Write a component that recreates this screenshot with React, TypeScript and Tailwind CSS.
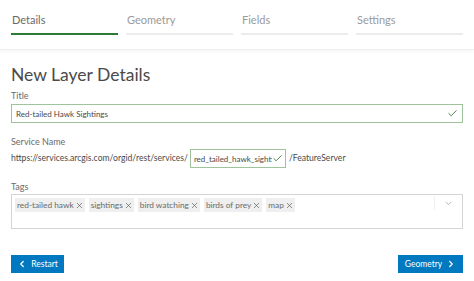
import { ChevronDown, ChevronLeft, ChevronRight, Check, X } from 'lucide-react';

const tabs = ['Details', 'Geometry', 'Fields', 'Settings'];
const tags = ['red-tailed hawk', 'sightings', 'bird watching', 'birds of prey', 'map'];

export default function App() {
  return (
    <div className="h-[281px] w-[474px] overflow-hidden bg-white font-['Lato',sans-serif] text-[#4a4a4a]">
      <div className="flex gap-2 border-b border-[#f0f0f0] px-[11px] pt-[12px] pb-[14px] shadow-[0_2px_3px_rgba(0,0,0,0.04)]">
        {tabs.map((tab, i) => (
          <div key={tab} className="flex-1">
            <div className={`h-[20px] px-[1px] text-[11px] leading-[16px] ${i === 0 ? 'text-[#6a6a6a]' : 'text-[#9a9a9a]'}`}>
              {tab}
            </div>
            <div className={`mt-[1px] h-[2px] ${i === 0 ? 'bg-[#2d7a34]' : 'bg-[#ececec]'}`} />
          </div>
        ))}
      </div>

      <div className="px-[11px] pt-[14px]">
        <h1 className="text-[17.5px] leading-[22px] text-[#4a4a4a]">New Layer Details</h1>

        <label className="mt-[4px] block text-[9px] leading-[12px] text-[#6a6a6a]">Title</label>
        <div className="mt-[2px] flex h-[19px] items-center border border-[#9fc39a] px-[4px]">
          <span className="flex-1 text-[8px] text-[#4a4a4a]">Red-tailed Hawk Sightings</span>
          <Check className="h-[11px] w-[11px] text-[#3d7a3d]" strokeWidth={2} />
        </div>

        <label className="mt-[13px] block text-[9px] leading-[12px] text-[#6a6a6a]">Service Name</label>
        <div className="mt-[1px] flex items-center text-[8.6px] text-[#4a4a4a]">
          <span>https://services.arcgis.com/orgid/rest/services/</span>
          <div className="ml-[2px] flex h-[19px] w-[96px] items-center overflow-hidden border border-[#9fc39a] pl-[3px] pr-[2px]">
            <span className="min-w-0 flex-1 overflow-hidden whitespace-nowrap text-[8px]">red_tailed_hawk_sightings</span>
            <Check className="h-[11px] w-[11px] shrink-0 text-[#3d7a3d]" strokeWidth={2} />
          </div>
          <span className="ml-[3px]">/FeatureServer</span>
        </div>

        <label className="mt-[13px] block text-[9px] leading-[12px] text-[#6a6a6a]">Tags</label>
        <div className="mt-[1px] flex h-[35px] border border-[#d4d4d4]">
          <div className="flex flex-1 flex-wrap items-start gap-[4px] pl-[3px] pt-[3px]">
            {tags.map((tag) => (
              <span key={tag} className="flex h-[14px] items-center gap-[1px] bg-[#efefef] pl-[2px] pr-[1px] text-[8.3px] text-[#6a6a6a]">
                {tag}
                <X className="h-[9px] w-[9px] text-[#555]" strokeWidth={1.75} />
              </span>
            ))}
          </div>
          <div className="mt-[1px] flex h-[14px] w-[28px] items-center justify-center border-l border-[#f0f0f0]">
            <ChevronDown className="h-[9px] w-[9px] text-[#9a9a9a]" strokeWidth={2} />
          </div>
        </div>

        <div className="mt-[26px] flex justify-between">
          <button className="flex h-[18px] w-[53px] items-center justify-center gap-[4px] bg-[#0079c1] text-[8.5px] text-white">
            <ChevronLeft className="h-[10px] w-[10px]" strokeWidth={3} />
            Restart
          </button>
          <button className="flex h-[18px] w-[65px] items-center justify-center gap-[4px] bg-[#0079c1] text-[8.5px] text-white">
            Geometry
            <ChevronRight className="h-[10px] w-[10px]" strokeWidth={3} />
          </button>
        </div>
      </div>
    </div>
  );
}
